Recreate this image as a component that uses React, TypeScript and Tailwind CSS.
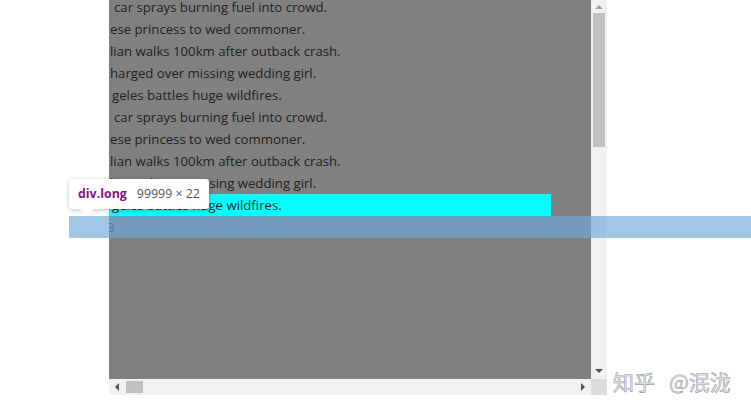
const headlines = [
  { text: "car sprays burning fuel into crowd.", pad: "pl-[5px]" },
  { text: "ese princess to wed commoner.", pad: "pl-[1px]" },
  { text: "lian walks 100km after outback crash.", pad: "pl-[1px]" },
  { text: "harged over missing wedding girl.", pad: "pl-[1px]" },
  { text: "geles battles huge wildfires.", pad: "pl-[3px]" },
];

// two rounds of the same five headlines, then the long div
const rows = [...headlines, ...headlines];

export default function App() {
  return (
    <div className="relative w-[751px] h-[413px] bg-white overflow-hidden font-['Open_Sans',sans-serif]">
      <div className="ml-[109px] flex">
        {/* Page viewport */}
        <div className="w-[482px]">
          <div className="h-[379px] bg-[#808080] overflow-hidden">
            <div className="-mt-[4px] text-[13.2px] leading-[22px] text-[#222]">
              {rows.map((row, i) => (
                <div
                  key={i}
                  className={i === 9 ? `${row.pad} w-[442px] h-[22px] bg-[#00ffff] whitespace-nowrap` : `${row.pad} h-[22px] whitespace-nowrap`}
                >
                  {row.text}
                </div>
              ))}
              <div className="h-[22px] -ml-[2px] whitespace-nowrap">3</div>
            </div>
          </div>
          {/* Horizontal scrollbar */}
          <div className="h-[16px] bg-[#f1f1f1] flex items-center">
            <div className="w-[16px] flex justify-center">
              <div className="w-0 h-0 border-y-[4px] border-y-transparent border-r-[4px] border-r-[#505050]" />
            </div>
            <div className="ml-[1px] w-[17px] h-[12px] bg-[#c1c1c1]" />
            <div className="flex-1" />
            <div className="w-[16px] flex justify-center">
              <div className="w-0 h-0 border-y-[4px] border-y-transparent border-l-[4px] border-l-[#505050]" />
            </div>
          </div>
        </div>
        {/* Vertical scrollbar */}
        <div className="w-[16px] flex flex-col">
          <div className="h-[379px] bg-[#f1f1f1] flex flex-col items-center">
            <div className="h-[13px] flex items-center">
              <div className="w-0 h-0 border-x-[4px] border-x-transparent border-b-[4px] border-b-[#a3a3a3]" />
            </div>
            <div className="w-[12px] h-[134px] bg-[#c1c1c1]" />
            <div className="flex-1" />
            <div className="h-[16px] flex items-center">
              <div className="w-0 h-0 border-x-[4px] border-x-transparent border-t-[4px] border-t-[#505050]" />
            </div>
          </div>
          <div className="h-[16px] bg-[#dcdcdc]" />
        </div>
      </div>

      {/* Devtools highlight of div.long */}
      <div className="absolute left-[69px] top-[216px] w-[682px] h-[22px] bg-[rgba(111,168,220,0.66)]" />

      {/* Devtools tooltip */}
      <div className="absolute left-[69px] top-[179px] h-[30px] px-[9px] bg-white rounded-[3px] shadow-[0_1px_4px_rgba(0,0,0,0.25)] flex items-center gap-[10px] text-[12.4px] whitespace-nowrap">
        <span className="font-bold text-[#881280]">div.long</span>
        <span className="text-[#555]">99999 × 22</span>
        <div className="absolute left-[11px] -bottom-[7px] w-0 h-0 border-x-[7px] border-x-transparent border-t-[7px] border-t-white" />
      </div>

      {/* Watermark */}
      <div className="absolute left-[613px] top-[368px] flex gap-[14px] text-[21px] leading-[26px] text-[#ececec] font-['Noto_Sans_CJK_SC',sans-serif] [-webkit-text-stroke:0.6px_#9c9c9c] whitespace-nowrap">
        <span>知乎</span>
        <span>@泯泷</span>
      </div>
    </div>
  );
}
